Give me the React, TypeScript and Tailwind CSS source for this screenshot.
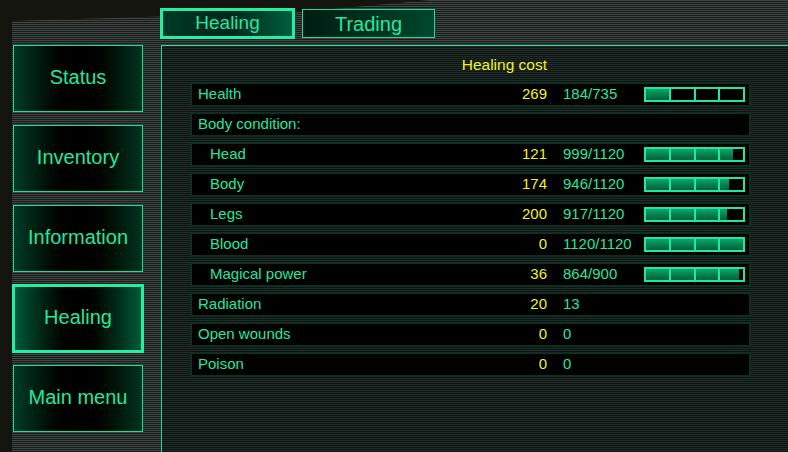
import React from "react";

type Row = {
  label: string;
  sub?: boolean;
  cost?: number;
  cur?: number;
  max?: number;
  plain?: string;
};

const rows: Row[] = [
  { label: "Health", cost: 269, cur: 184, max: 735 },
  { label: "Body condition:" },
  { label: "Head", sub: true, cost: 121, cur: 999, max: 1120 },
  { label: "Body", sub: true, cost: 174, cur: 946, max: 1120 },
  { label: "Legs", sub: true, cost: 200, cur: 917, max: 1120 },
  { label: "Blood", sub: true, cost: 0, cur: 1120, max: 1120 },
  { label: "Magical power", sub: true, cost: 36, cur: 864, max: 900 },
  { label: "Radiation", cost: 20, plain: "13" },
  { label: "Open wounds", cost: 0, plain: "0" },
  { label: "Poison", cost: 0, plain: "0" },
];

const menu = ["Status", "Inventory", "Information", "Healing", "Main menu"];

function Bar({ cur, max }: { cur: number; max: number }) {
  const segs = (cur / max) * 4;
  return (
    <div className="flex w-[101px] h-[15px] border-2 border-[#1fe9a0] bg-black">
      {[0, 1, 2, 3].map((i) => {
        const f = Math.max(0, Math.min(1, segs - i));
        return (
          <div key={i} className={"flex-1 h-full " + (i < 3 ? "border-r-2 border-[#1fe9a0]" : "")}>
            <div
              className="h-full bg-linear-to-b from-[#0aa86b] to-[#045f39]"
              style={{ width: `${f * 100}%` }}
            />
          </div>
        );
      })}
    </div>
  );
}

export default function App() {
  return (
    <div className="relative w-[788px] h-[452px] overflow-hidden bg-[#15150f] font-['Liberation_Sans',Arial,sans-serif] text-[#22e89e]">
      {/* scanline backdrop */}
      <div className="absolute inset-0 [clip-path:polygon(12px_21px,300px_12px,430px_0,100%_0,100%_100%,12px_100%)] bg-[repeating-linear-gradient(to_bottom,#3d4644_0_1px,#1a1c1a_1px_2px)]" />

      <div className="relative flex h-full">
        {/* Sidebar */}
        <div className="w-[161px] pl-[13px] pt-[45px] flex flex-col gap-[13px]">
          {menu.map((m) =>
            m === "Healing" ? (
              <div
                key={m}
                className="-ml-px -my-px w-[132px] h-[69px] pb-[3px] border-[3px] border-[#23f0a3] bg-linear-to-r from-[#005a3a] via-black to-[#005a3a] flex items-center justify-center text-[20px]"
              >
                {m}
              </div>
            ) : (
              <div
                key={m}
                className="w-[130px] h-[67px] pb-[3px] border border-[#1fdc98] bg-linear-to-r from-[#003d27] via-black to-[#00351f] flex items-center justify-center text-[20px]"
              >
                {m}
              </div>
            )
          )}
        </div>

        {/* Main column */}
        <div className="flex-1 flex flex-col">
          <div className="flex gap-[7px] pt-[9px] h-[45px]">
            <div className="-ml-px -mt-px w-[135px] h-[31px] border-[3px] border-[#23f0a3] bg-linear-to-r from-[#003a26] via-[#00261a] to-[#005f3e] flex items-center justify-center text-[19px]">
              Healing
            </div>
            <div className="w-[133px] h-[29px] border border-[#1fdc98] bg-linear-to-r from-[#001c12] to-[#00472d] flex items-center justify-center text-[20px]">
              Trading
            </div>
          </div>

          <div className="flex-1 border-t border-l border-[#22dc9c] bg-[repeating-linear-gradient(to_bottom,#1e2a26_0_1px,#0f1512_1px_2px)] pl-[28px] pt-[9px]">
            <div className="w-[561px] flex h-[20px] items-center">
              <div className="w-[357px] text-right text-[15.5px] text-[#f2f21c]">Healing cost</div>
            </div>
            <div className="mt-[7px] flex flex-col gap-[5px] w-[561px]">
              {rows.map((r) => (
                <div
                  key={r.label}
                  className="h-[25px] flex items-center border-2 border-[#0b3022] bg-black pl-[6px] pr-[4px] text-[15px]"
                >
                  <span className={"flex-1 " + (r.sub ? "pl-[12px]" : "")}>{r.label}</span>
                  {r.cost !== undefined && (
                    <>
                      <span className="w-[50px] text-right text-[#f2f21c]">{r.cost}</span>
                      <span className="ml-[16px] w-[81px]">
                        {r.max !== undefined ? `${r.cur}/${r.max}` : r.plain}
                      </span>
                      <div className="w-[101px]">
                        {r.max !== undefined && <Bar cur={r.cur!} max={r.max} />}
                      </div>
                    </>
                  )}
                </div>
              ))}
            </div>
          </div>
        </div>
      </div>
    </div>
  );
}
